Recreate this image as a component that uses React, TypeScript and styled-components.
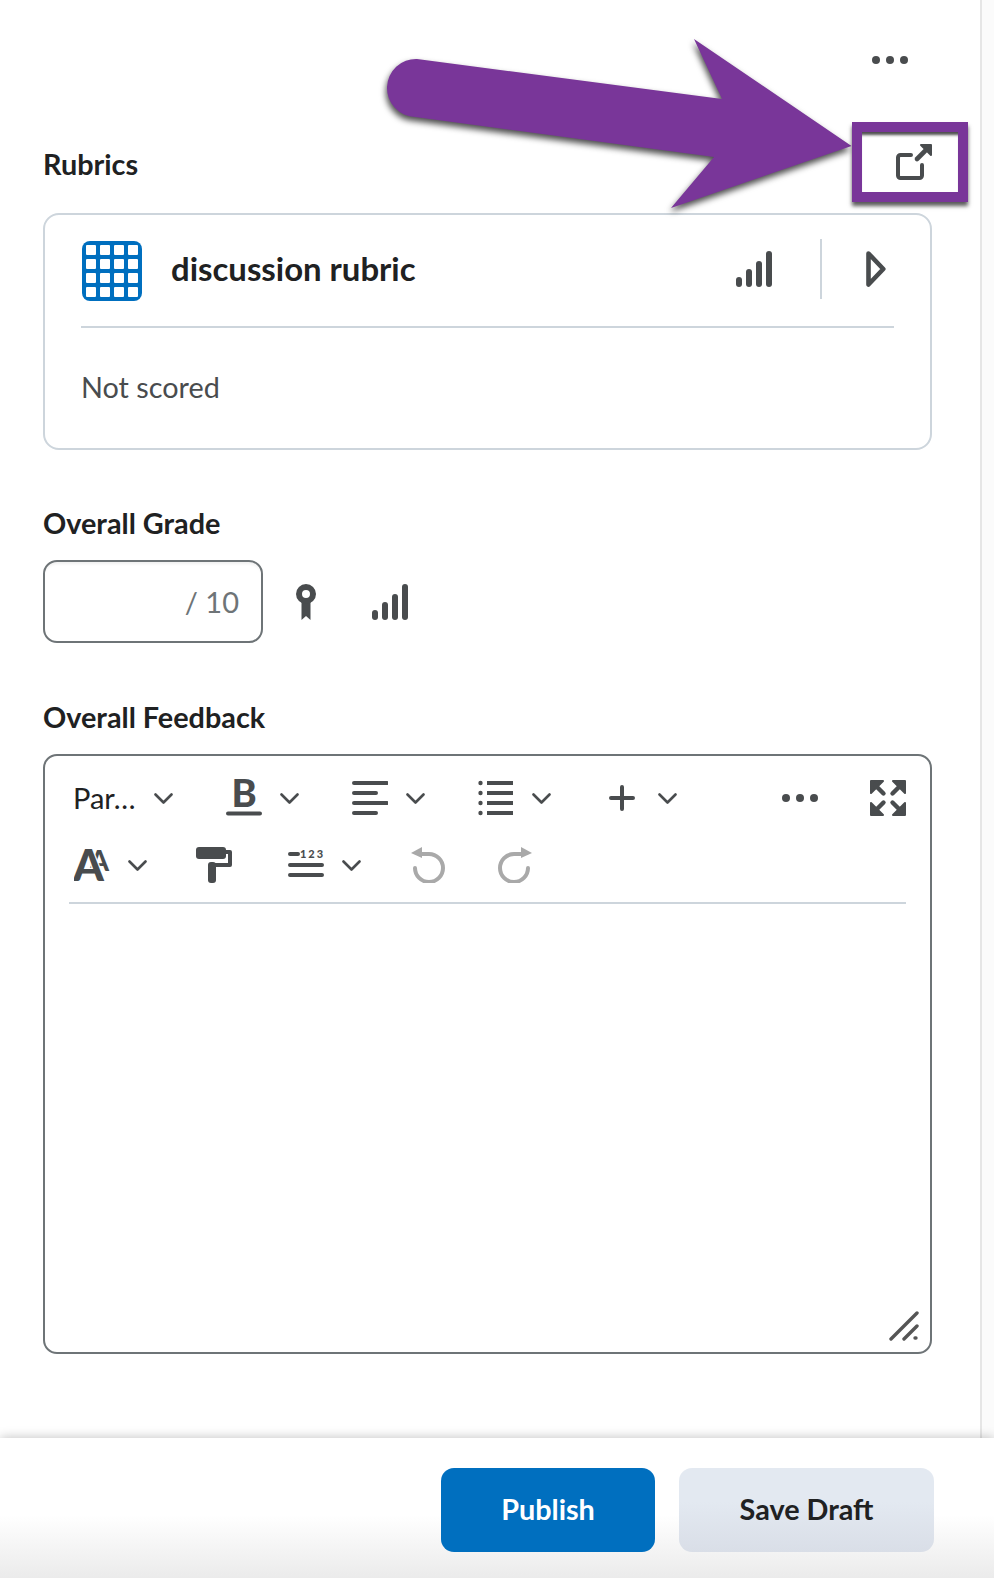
import React from "react";
import styled, { createGlobalStyle } from "styled-components";

const INK = "#494c4e";
const PURPLE = "#793699";
const BLUE = "#006fbf";

const Global = createGlobalStyle`
  html, body { margin: 0; padding: 0; background: #fff; }
  body { font-family: Lato, "Open Sans", sans-serif; color: #202122; }
  * { box-sizing: border-box; }
`;

const Page = styled.div`
  position: relative;
  width: 994px;
  height: 1578px;
  display: flex;
  flex-direction: column;
  overflow: hidden;
  background: #fff;
`;
const Body = styled.div`
  height: 1438px;
  display: flex;
  background: #fbfbfb;
`;
const Main = styled.main`
  width: 982px;
  padding: 0 48px 0 43px;
  background: #fff;
  border-right: 2px solid #e6e6e6;
`;
const TopRow = styled.div`
  height: 120px;
  display: flex;
  justify-content: flex-end;
  align-items: center;
  padding-right: 24px;
`;
const LabelRow = styled.div`
  height: 84px;
  margin-bottom: 9px;
  display: flex;
  justify-content: space-between;
  align-items: center;
`;
const Label = styled.h2`
  margin: 0;
  font-size: 28.8px;
  line-height: 34px;
  font-weight: 700;
  color: #202122;
`;
const RubricsLabel = styled(Label)`
  margin-top: 4px;
`;
const Card = styled.section`
  height: 237px;
  border: 2px solid #cdd5dc;
  border-radius: 16px;
  padding: 0 36px;
`;
const CardHead = styled.div`
  height: 113px;
  padding-bottom: 4px;
  display: flex;
  align-items: center;
  border-bottom: 2px solid #cdd5dc;
`;
const RubricIcon = styled.svg`
  width: 60px;
  height: 60px;
  margin: 4px 29px 0 1px;
  flex: none;
`;
const RubricTitle = styled.div`
  font-size: 32.9px;
  font-weight: 700;
  line-height: 40px;
  margin: 1px auto 0 0;
`;
const Divider = styled.div`
  width: 2px;
  height: 60px;
  background: #cdd5dc;
  margin: 0 44px 0 48px;
`;
const PlayWrap = styled.div`
  margin: 1px 8px 0 0;
  display: flex;
`;
const NotScored = styled.p`
  margin: 41px 0 0;
  font-size: 28.8px;
  line-height: 36px;
  color: ${INK};
`;
const Section = styled.section<{ $top: number }>`
  margin-top: ${(p) => p.$top}px;
`;
const GradeRow = styled.div`
  display: flex;
  align-items: center;
  margin-top: 20px;
`;
const GradeBox = styled.div`
  width: 220px;
  height: 83px;
  border: 2px solid #6e7477;
  border-radius: 14px;
  box-shadow: inset 0 4px 3px -2px #f0f0f0;
  display: flex;
  align-items: center;
  justify-content: flex-end;
  padding: 0 22px 0 0;
  font-size: 29px;
  color: #6e7477;
`;
const GradeIcons = styled.div`
  display: flex;
  gap: 56px;
  margin-left: 33px;
  margin-top: 0;
`;
const Editor = styled.div`
  position: relative;
  width: 889px;
  height: 600px;
  margin-top: 20px;
  border: 2px solid #6e7477;
  border-radius: 14px;
  padding: 24px 24px 0 24px;
`;
const ToolRow = styled.div`
  display: flex;
  align-items: center;
  height: 36px;
  padding-left: 5px;
`;
const SecondRow = styled(ToolRow)`
  margin-top: 31px;
`;
const Tool = styled.div<{ $w: number }>`
  width: ${(p) => p.$w}px;
  flex: none;
  display: flex;
  align-items: center;
  gap: 18px;
`;
const FormatName = styled.span`
  width: 63px;
  margin-left: -1px;
  font-size: 29px;
  line-height: 36px;
  color: #202122;
`;
const ToolDivider = styled.div`
  height: 2px;
  margin: 19px 0 0 0;
  width: 837px;
  background: #cdd5dc;
`;
const Grip = styled.svg`
  position: absolute;
  right: 11px;
  bottom: 11px;
  width: 30px;
  height: 30px;
`;
const Footer = styled.footer`
  position: relative;
  height: 140px;
  padding: 30px 60px 0 0;
  display: flex;
  justify-content: flex-end;
  gap: 24px;
  background: linear-gradient(#fff 0, #fff 55%, #ebebeb 100%);
  box-shadow: 0 -1px 10px rgba(0, 0, 0, 0.22);
`;
const Button = styled.button<{ $primary?: boolean; $w: number }>`
  width: ${(p) => p.$w}px;
  height: 84px;
  border: 0;
  border-radius: 13px;
  padding: 0 0 3px;
  font-family: Lato, sans-serif;
  font-weight: 700;
  font-size: 28.8px;
  color: ${(p) => (p.$primary ? "#fff" : "#202122")};
  background: ${(p) => (p.$primary ? BLUE : "linear-gradient(#e3e9f1 40%, #d9dee7)")};
`;
const Callout = styled.svg`
  position: absolute;
  left: 0;
  top: 0;
  width: 994px;
  height: 240px;
  filter: drop-shadow(-1px 4px 3px rgba(0, 0, 0, 0.7));
  pointer-events: none;
`;
const Highlight = styled.div`
  position: absolute;
  left: 852px;
  top: 122px;
  width: 116px;
  height: 80px;
  border: 10px solid ${PURPLE};
  box-shadow: 0 4px 4px rgba(0, 0, 0, 0.65), inset 0 5px 3px -2px rgba(0, 0, 0, 0.7);
  pointer-events: none;
`;
const IconSvg = styled.svg<{ $w?: number; $h?: number }>`
  width: ${(p) => p.$w ?? 36}px;
  height: ${(p) => p.$h ?? 36}px;
  flex: none;
  display: block;
`;
const GlyphSvg = styled.svg`
  width: 36px;
  height: 64px;
  margin: -14px 0;
  flex: none;
  display: block;
`;

const Dots = () => (
  <IconSvg $h={10} viewBox="0 0 36 10" fill={INK}>
    <circle cx="4" cy="5" r="4" />
    <circle cx="18" cy="5" r="4" />
    <circle cx="32" cy="5" r="4" />
  </IconSvg>
);
const Bars = () => (
  <IconSvg viewBox="0 0 36 36" fill={INK}>
    <rect x="0" y="26" width="6" height="10" rx="3" />
    <rect x="10" y="18" width="6" height="18" rx="3" />
    <rect x="20" y="10" width="6" height="26" rx="3" />
    <rect x="30" y="0" width="6" height="36" rx="3" />
  </IconSvg>
);
const Chevron = () => (
  <IconSvg $w={19} $h={11} viewBox="0 0 19 11" fill="none" stroke={INK} strokeWidth="2.6" strokeLinecap="round" strokeLinejoin="round">
    <path d="M1.5 1.5 9.5 9.5 17.5 1.5" />
  </IconSvg>
);
const External = () => (
  <IconSvg viewBox="0 0 36 36" fill="none" stroke={INK} strokeWidth="4" strokeLinecap="round" strokeLinejoin="round">
    <path d="M15 11H4.500A2.500 2.500 0 0 0 2 13.500V31.500A2.500 2.500 0 0 0 4.500 34H23.500A2.500 2.500 0 0 0 26 31.500V21" />
    <path d="M21 15 29 7" strokeWidth="4.600" />
    <path d="M25 1H35V11Z" fill={INK} strokeWidth="2" />
  </IconSvg>
);
const Play = () => (
  <IconSvg $w={20} viewBox="0 0 20 36" fill="none" stroke={INK} strokeWidth="4.6" strokeLinejoin="round">
    <path d="M2.500 2.500 17.300 18 2.500 33.500Z" />
  </IconSvg>
);
const Ribbon = () => (
  <IconSvg $w={20} viewBox="0 0 20 36">
    <path d="M5.500 15H14.500V36L10 32 5.500 36Z" fill={INK} />
    <circle cx="10" cy="10" r="7" fill="#fff" stroke={INK} strokeWidth="6" />
  </IconSvg>
);
const GridIcon = () => {
  const cells = [4, 18, 32, 46];
  return (
    <RubricIcon viewBox="0 0 60 60">
      <rect width="60" height="60" rx="8" fill={BLUE} />
      {cells.map((y) =>
        cells.map((x) => <rect key={`${x}-${y}`} x={x} y={y} width="10" height="10" rx="1" fill="#fff" />)
      )}
    </RubricIcon>
  );
};
const Bold = () => (
  <GlyphSvg viewBox="0 -14 36 64">
    <text x="18" y="27" textAnchor="middle" fontFamily="Lato" fontWeight="900" fontSize="38" fill={INK}>B</text>
    <rect x="0" y="31.500" width="36" height="4" rx="2" fill={INK} />
  </GlyphSvg>
);
const Align = () => (
  <IconSvg viewBox="0 0 36 36" fill="none" stroke={INK} strokeWidth="4" strokeLinecap="round">
    <path d="M2 3H35M2 13H24M2 23H35M2 33H24" />
  </IconSvg>
);
const List = () => (
  <IconSvg viewBox="0 0 36 36" fill={INK}>
    {[3, 13, 23, 33].map((y) => (
      <React.Fragment key={y}>
        <circle cx="2.500" cy={y} r="2.200" />
        <rect x="9" y={y - 2} width="26" height="4" />
      </React.Fragment>
    ))}
  </IconSvg>
);
const Plus = () => (
  <IconSvg viewBox="0 0 36 36" fill="none" stroke={INK} strokeWidth="4" strokeLinecap="round">
    <path d="M18 7V29M7 18H29" />
  </IconSvg>
);
const Fullscreen = () => (
  <IconSvg viewBox="0 0 36 36" fill={INK} stroke={INK} strokeLinejoin="round" strokeLinecap="round">
    <g strokeWidth="2">
      <path d="M1 1H13L1 13Z" />
      <path d="M35 1H23L35 13Z" />
      <path d="M1 35H13L1 23Z" />
      <path d="M35 35H23L35 23Z" />
    </g>
    <g strokeWidth="4.400" fill="none">
      <path d="M5 5 13.500 13.500M31 5 22.500 13.500M5 31 13.500 22.500M31 31 22.500 22.500" />
    </g>
  </IconSvg>
);
const TextSize = () => (
  <GlyphSvg viewBox="0 -14 36 64">
    <text fontFamily="Lato" fontWeight="900" fill={INK} stroke="#fff" strokeWidth="2.500" paintOrder="stroke">
      <tspan x="15" y="24" fontSize="29" fontWeight="700">A</tspan>
      <tspan x="-1" y="34" fontSize="44">A</tspan>
    </text>
  </GlyphSvg>
);
const Roller = () => (
  <IconSvg viewBox="0 0 36 36" fill={INK}>
    <rect x="0" y="0" width="30" height="12" rx="3" />
    <path d="M29 5H34V18H16" fill="none" stroke={INK} strokeWidth="4" strokeLinejoin="round" />
    <rect x="12" y="15" width="8" height="21" rx="3" />
  </IconSvg>
);
const LineNumbers = () => (
  <IconSvg viewBox="0 0 36 36" fill="none" stroke={INK} strokeWidth="4" strokeLinecap="round">
    <path d="M2 7H10M2 18H34M2 28H34" />
    <text x="24.500" y="11" textAnchor="middle" fontFamily="Lato" fontWeight="900" fontSize="11" letterSpacing="2" fill={INK} stroke="none">123</text>
  </IconSvg>
);
const Undo = ({ flip }: { flip?: boolean }) => (
  <IconSvg viewBox="0 0 36 36" fill="none" stroke="#a9a9a9" strokeWidth="4" strokeLinecap="round">
    <g transform={flip ? "translate(36 0) scale(-1 1)" : undefined}>
      <path d="M12 7H19A14 14 0 1 1 5 21" />
      <path d="M1 6 12 0V11Z" fill="#a9a9a9" stroke="none" />
    </g>
  </IconSvg>
);

export default function App() {
  return (
    <Page>
      <Global />
      <Body>
        <Main>
          <TopRow>
            <Dots />
          </TopRow>
          <LabelRow>
            <RubricsLabel>Rubrics</RubricsLabel>
            <External />
          </LabelRow>
          <Card>
            <CardHead>
              <GridIcon />
              <RubricTitle>discussion rubric</RubricTitle>
              <Bars />
              <Divider />
              <PlayWrap>
                <Play />
              </PlayWrap>
            </CardHead>
            <NotScored>Not scored</NotScored>
          </Card>
          <Section $top={56}>
            <Label>Overall Grade</Label>
            <GradeRow>
              <GradeBox>/ 10</GradeBox>
              <GradeIcons>
                <Ribbon />
                <Bars />
              </GradeIcons>
            </GradeRow>
          </Section>
          <Section $top={57}>
            <Label>Overall Feedback</Label>
            <Editor>
              <ToolRow>
                <Tool $w={152}>
                  <FormatName>Par…</FormatName>
                  <Chevron />
                </Tool>
                <Tool $w={126}>
                  <Bold />
                  <Chevron />
                </Tool>
                <Tool $w={126}>
                  <Align />
                  <Chevron />
                </Tool>
                <Tool $w={126}>
                  <List />
                  <Chevron />
                </Tool>
                <Tool $w={178}>
                  <Plus />
                  <Chevron />
                </Tool>
                <Tool $w={88}>
                  <Dots />
                </Tool>
                <Tool $w={36}>
                  <Fullscreen />
                </Tool>
              </ToolRow>
              <SecondRow>
                <Tool $w={122}>
                  <TextSize />
                  <Chevron />
                </Tool>
                <Tool $w={92}>
                  <Roller />
                </Tool>
                <Tool $w={122}>
                  <LineNumbers />
                  <Chevron />
                </Tool>
                <Tool $w={87}>
                  <Undo />
                </Tool>
                <Tool $w={36}>
                  <Undo flip />
                </Tool>
              </SecondRow>
              <ToolDivider />
              <Grip viewBox="0 0 30 30" fill="none" stroke="#555" strokeWidth="3.400" strokeLinecap="round">
                <path d="M2 28 28 2M15 28 28 15M26 27H27" />
              </Grip>
            </Editor>
          </Section>
        </Main>
      </Body>
      <Footer>
        <Button $primary $w={214}>Publish</Button>
        <Button $w={255}>Save Draft</Button>
      </Footer>
      <Callout viewBox="0 0 994 240">
        <path d="M417 59 722 99 694 39 851.500 146 671 208 714 157 415 117A29 29 0 0 1 417 59Z" fill={PURPLE} />
      </Callout>
      <Highlight />
    </Page>
  );
}
